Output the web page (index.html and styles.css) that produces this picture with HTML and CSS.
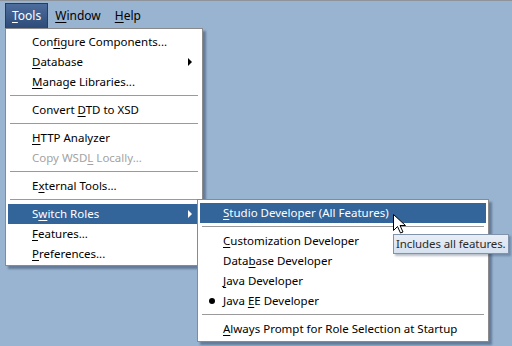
FILE: index.html
```html
<!DOCTYPE html>
<html lang="en">
<head>
    <meta charset="UTF-8">
    <title>Tools menu</title>
    <link rel="stylesheet" href="styles.css">
</head>
<body>

<div class="desktop">
    <div class="menubar">
        <div class="menubar-item active"><u>T</u>ools</div>
        <div class="menubar-item"><u>W</u>indow</div>
        <div class="menubar-item"><u>H</u>elp</div>
    </div>

    <!-- Tools menu -->
    <div class="popup main-menu">
        <div class="item">Con<u>f</u>igure Components...</div>
        <div class="item has-sub"><u>D</u>atabase</div>
        <div class="item"><u>M</u>anage Libraries...</div>
        <div class="sep"></div>
        <div class="item">Convert <u>D</u>TD to XSD</div>
        <div class="sep"></div>
        <div class="item"><u>H</u>TTP Analyzer</div>
        <div class="item disabled">Copy WSD<u>L</u> Locally...</div>
        <div class="sep"></div>
        <div class="item">E<u>x</u>ternal Tools...</div>
        <div class="sep"></div>
        <div class="item has-sub selected">S<u>w</u>itch Roles</div>
        <div class="item"><u>F</u>eatures...</div>
        <div class="item"><u>P</u>references...</div>
    </div>

    <!-- Switch Roles submenu -->
    <div class="popup sub-menu">
        <div class="item selected"><u>S</u>tudio Developer (All Features)</div>
        <div class="sep"></div>
        <div class="item"><u>C</u>ustomization Developer</div>
        <div class="item">Data<u>b</u>ase Developer</div>
        <div class="item"><u>J</u>ava Developer</div>
        <div class="item checked">Java <u>E</u>E Developer</div>
        <div class="sep"></div>
        <div class="item"><u>A</u>lways Prompt for Role Selection at Startup</div>
    </div>

    <div class="tooltip">Includes all features.</div>

    <svg class="cursor" width="13" height="20" viewBox="0 0 13 20">
        <path d="M0.5 0.5 L0.5 16.5 L4.5 12.5 L7.5 19 L10 18 L7 11.5 L12.5 11.5 Z"
              fill="#fff" stroke="#000" stroke-width="1" stroke-linejoin="miter"/>
    </svg>
</div>

</body>
</html>
```

FILE: styles.css
```css
body {
    margin: 0;
    padding: 0;
    font-family: 'Noto Sans', 'Liberation Sans', sans-serif;
    font-size: 11.5px;
    color: #000;
    background-color: #99b4d1;
}

.desktop {
    position: relative;
    width: 512px;
    height: 346px;
    overflow: hidden;
    border-top: 1px solid #8e949c;
    box-sizing: border-box;
}

u {
    text-decoration: underline;
    text-underline-offset: 2px;
}

.menubar {
    display: flex;
    padding: 2px 0 0 5px;
    height: 25px;
}

.menubar-item {
    padding: 0 7px;
    line-height: 25px;
    height: 25px;
    box-sizing: border-box;
    font-size: 12px;
}

.menubar-item.active {
    color: #fff;
    background: linear-gradient(#4d6d9c, #2d4b78);
    border: 1px solid #263d62;
    border-bottom: none;
    line-height: 23px;
    padding: 0 6px;
}

.popup {
    position: absolute;
    background-color: #fff;
    border: 1px solid #8a8a8a;
    box-shadow: 3px 3px 2px rgba(20, 40, 70, 0.4);
}

.main-menu {
    left: 5px;
    top: 27px;
    width: 196px;
    padding: 3px 0 1px;
}

.sub-menu {
    left: 197px;
    top: 198px;
    width: 290px;
    padding: 3px 0 2px;
}

.item {
    position: relative;
    height: 20px;
    line-height: 20px;
    margin: 0 2px;
    padding-left: 24px;
    white-space: nowrap;
}

.sub-menu .item {
    padding-left: 23px;
}

.item.disabled {
    color: #a3a3a3;
}

.item.selected {
    background-color: #33649a;
    color: #fff;
}

.has-sub::after {
    content: "";
    position: absolute;
    right: 8px;
    top: 6px;
    border-left: 4px solid #000;
    border-top: 4px solid transparent;
    border-bottom: 4px solid transparent;
}

.has-sub.selected::after {
    border-left-color: #fff;
}

.checked::before {
    content: "";
    position: absolute;
    left: 9px;
    top: 7px;
    width: 6px;
    height: 6px;
    border-radius: 50%;
    background-color: #000;
}

.sep {
    height: 8px;
    margin: 0 4px;
    position: relative;
}

.sep::after {
    content: "";
    position: absolute;
    left: 0;
    right: 0;
    top: 3px;
    border-top: 1px solid #9a9a9a;
}

.tooltip {
    position: absolute;
    left: 393px;
    top: 233px;
    height: 18px;
    padding: 0 2px;
    line-height: 18px;
    font-size: 11.5px;
    letter-spacing: -0.1px;
    color: #2a2a2a;
    background: linear-gradient(#e9eef6, #d6e1f0);
    border: 1px solid #7f93ad;
    box-shadow: 2px 2px 2px rgba(20, 40, 70, 0.3);
    white-space: nowrap;
}

.cursor {
    position: absolute;
    left: 393px;
    top: 213px;
}
```
